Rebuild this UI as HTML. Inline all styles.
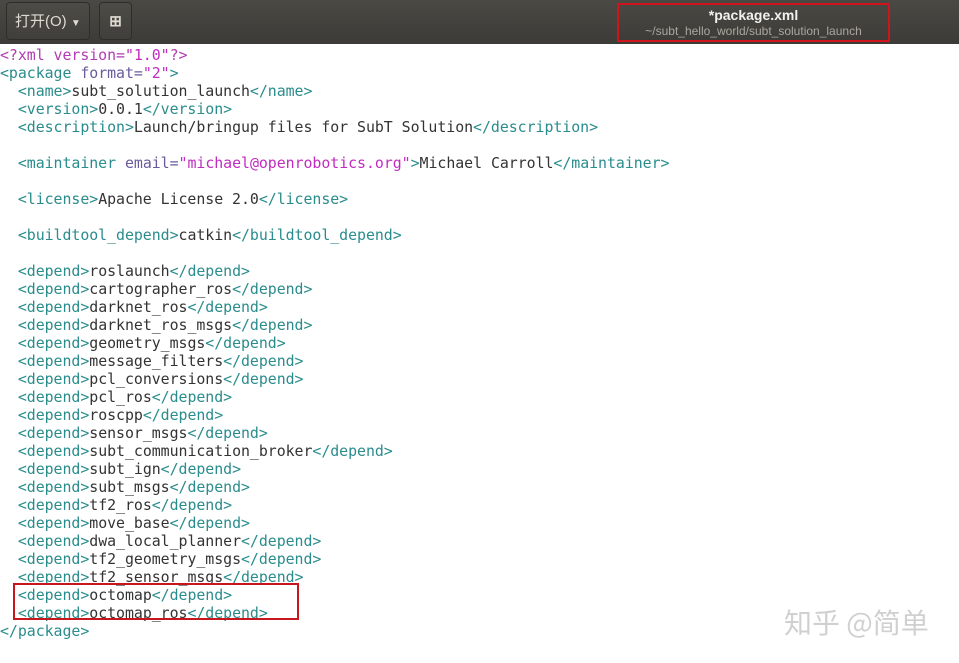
<!DOCTYPE html>
<html><head><meta charset="utf-8"><style>
body{margin:0;width:959px;height:663px;background:#fff;overflow:hidden;position:relative;font-family:"Liberation Sans","Noto Sans CJK SC",sans-serif}
.hdr{position:absolute;left:0;top:0;width:959px;height:44px;background:linear-gradient(#4a4944,#3c3b37)}
.btn{position:absolute;top:2px;height:38px;border:1px solid #2e2d2a;border-radius:4px;background:linear-gradient(#4d4c47,#403f3b);color:#dfdbd2;font-size:15px;line-height:38px;box-sizing:border-box}
.title{position:absolute;left:617px;top:3px;width:273px;height:39px;border:2px solid #d0141c;box-sizing:border-box;text-align:center}
.t1{color:#f2f1ef;font-weight:bold;font-size:14px;line-height:16px;margin-top:2px}
.t2{color:#a9a79f;font-size:12px;line-height:16px}
pre{position:absolute;left:0;top:46px;margin:0;font-family:"DejaVu Sans Mono",monospace;font-size:14.9px;letter-spacing:-0.04px;line-height:18px;color:#333}
.g{color:#2a8c8c}.a{color:#6a5a9e}.s{color:#c02cc0}.p{color:#b23bb3}
.box{position:absolute;left:13px;top:583px;width:286px;height:37px;border:2px solid #c8161e;box-sizing:border-box}
.wm{position:absolute;left:784px;top:606px;font-size:28px;color:#d0d0d0;font-family:"Noto Sans CJK SC",sans-serif;line-height:32px}
</style></head><body>
<div class="hdr">
<div class="btn" style="left:6px;width:84px;padding-left:8px">打开(O) <span style="font-size:10px">▼</span></div>
<div class="btn" style="left:99px;width:33px;text-align:center;font-weight:bold">⊞</div>
<div class="title"><div class="t1">*package.xml</div><div class="t2">~/subt_hello_world/subt_solution_launch</div></div>
</div>
<pre><span class="p">&lt;?xml version=</span><span class="s">"1.0"</span><span class="p">?&gt;</span>
<span class="g">&lt;package</span> <span class="a">format=</span><span class="s">"2"</span><span class="g">&gt;</span>
  <span class="g">&lt;name&gt;</span>subt_solution_launch<span class="g">&lt;/name&gt;</span>
  <span class="g">&lt;version&gt;</span>0.0.1<span class="g">&lt;/version&gt;</span>
  <span class="g">&lt;description&gt;</span>Launch/bringup files for SubT Solution<span class="g">&lt;/description&gt;</span>

  <span class="g">&lt;maintainer</span> <span class="a">email=</span><span class="s">"michael@openrobotics.org"</span><span class="g">&gt;</span>Michael Carroll<span class="g">&lt;/maintainer&gt;</span>

  <span class="g">&lt;license&gt;</span>Apache License 2.0<span class="g">&lt;/license&gt;</span>

  <span class="g">&lt;buildtool_depend&gt;</span>catkin<span class="g">&lt;/buildtool_depend&gt;</span>

  <span class="g">&lt;depend&gt;</span>roslaunch<span class="g">&lt;/depend&gt;</span>
  <span class="g">&lt;depend&gt;</span>cartographer_ros<span class="g">&lt;/depend&gt;</span>
  <span class="g">&lt;depend&gt;</span>darknet_ros<span class="g">&lt;/depend&gt;</span>
  <span class="g">&lt;depend&gt;</span>darknet_ros_msgs<span class="g">&lt;/depend&gt;</span>
  <span class="g">&lt;depend&gt;</span>geometry_msgs<span class="g">&lt;/depend&gt;</span>
  <span class="g">&lt;depend&gt;</span>message_filters<span class="g">&lt;/depend&gt;</span>
  <span class="g">&lt;depend&gt;</span>pcl_conversions<span class="g">&lt;/depend&gt;</span>
  <span class="g">&lt;depend&gt;</span>pcl_ros<span class="g">&lt;/depend&gt;</span>
  <span class="g">&lt;depend&gt;</span>roscpp<span class="g">&lt;/depend&gt;</span>
  <span class="g">&lt;depend&gt;</span>sensor_msgs<span class="g">&lt;/depend&gt;</span>
  <span class="g">&lt;depend&gt;</span>subt_communication_broker<span class="g">&lt;/depend&gt;</span>
  <span class="g">&lt;depend&gt;</span>subt_ign<span class="g">&lt;/depend&gt;</span>
  <span class="g">&lt;depend&gt;</span>subt_msgs<span class="g">&lt;/depend&gt;</span>
  <span class="g">&lt;depend&gt;</span>tf2_ros<span class="g">&lt;/depend&gt;</span>
  <span class="g">&lt;depend&gt;</span>move_base<span class="g">&lt;/depend&gt;</span>
  <span class="g">&lt;depend&gt;</span>dwa_local_planner<span class="g">&lt;/depend&gt;</span>
  <span class="g">&lt;depend&gt;</span>tf2_geometry_msgs<span class="g">&lt;/depend&gt;</span>
  <span class="g">&lt;depend&gt;</span>tf2_sensor_msgs<span class="g">&lt;/depend&gt;</span>
  <span class="g">&lt;depend&gt;</span>octomap<span class="g">&lt;/depend&gt;</span>
  <span class="g">&lt;depend&gt;</span>octomap_ros<span class="g">&lt;/depend&gt;</span>
<span class="g">&lt;/package&gt;</span></pre>
<div class="box"></div>
<div class="wm">知乎 @简单</div>
</body></html>
